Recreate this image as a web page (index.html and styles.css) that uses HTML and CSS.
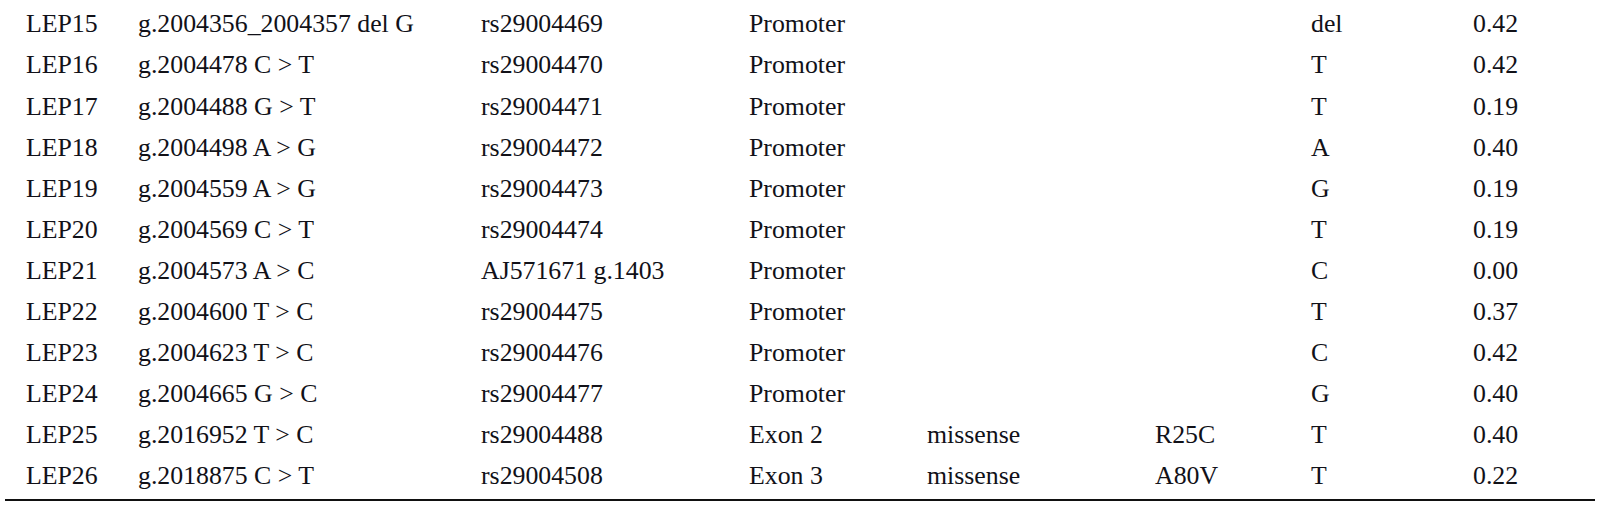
FILE: index.html
```html
<!DOCTYPE html>
<html>
<head>
<meta charset="utf-8">
<link rel="stylesheet" href="styles.css">
</head>
<body>
<div class="table">
  <div class="row"><span>LEP15</span><span>g.2004356_2004357 del G</span><span>rs29004469</span><span>Promoter</span><span></span><span></span><span>del</span><span>0.42</span></div>
  <div class="row"><span>LEP16</span><span>g.2004478 C &gt; T</span><span>rs29004470</span><span>Promoter</span><span></span><span></span><span>T</span><span>0.42</span></div>
  <div class="row"><span>LEP17</span><span>g.2004488 G &gt; T</span><span>rs29004471</span><span>Promoter</span><span></span><span></span><span>T</span><span>0.19</span></div>
  <div class="row"><span>LEP18</span><span>g.2004498 A &gt; G</span><span>rs29004472</span><span>Promoter</span><span></span><span></span><span>A</span><span>0.40</span></div>
  <div class="row"><span>LEP19</span><span>g.2004559 A &gt; G</span><span>rs29004473</span><span>Promoter</span><span></span><span></span><span>G</span><span>0.19</span></div>
  <div class="row"><span>LEP20</span><span>g.2004569 C &gt; T</span><span>rs29004474</span><span>Promoter</span><span></span><span></span><span>T</span><span>0.19</span></div>
  <div class="row"><span>LEP21</span><span>g.2004573 A &gt; C</span><span>AJ571671 g.1403</span><span>Promoter</span><span></span><span></span><span>C</span><span>0.00</span></div>
  <div class="row"><span>LEP22</span><span>g.2004600 T &gt; C</span><span>rs29004475</span><span>Promoter</span><span></span><span></span><span>T</span><span>0.37</span></div>
  <div class="row"><span>LEP23</span><span>g.2004623 T &gt; C</span><span>rs29004476</span><span>Promoter</span><span></span><span></span><span>C</span><span>0.42</span></div>
  <div class="row"><span>LEP24</span><span>g.2004665 G &gt; C</span><span>rs29004477</span><span>Promoter</span><span></span><span></span><span>G</span><span>0.40</span></div>
  <div class="row"><span>LEP25</span><span>g.2016952 T &gt; C</span><span>rs29004488</span><span>Exon 2</span><span>missense</span><span>R25C</span><span>T</span><span>0.40</span></div>
  <div class="row"><span>LEP26</span><span>g.2018875 C &gt; T</span><span>rs29004508</span><span>Exon 3</span><span>missense</span><span>A80V</span><span>T</span><span>0.22</span></div>
</div>
</body>
</html>
```

FILE: styles.css
```css
html, body {
  margin: 0;
  padding: 0;
  background: #ffffff;
}
body {
  font-family: "Liberation Serif", "Times New Roman", serif;
  font-size: 25.8px;
  color: #111118;
}
.table {
  width: 1590px;
  margin-left: 5px;
  padding-top: 3.4px;
  padding-bottom: 2.5px;
  border-bottom: 2px solid #111;
}
.row {
  display: grid;
  grid-template-columns: 112px 343px 268px 178px 228px 156px 162px 122px;
  padding-left: 21px;
  height: 41.1px;
  line-height: 41.1px;
  white-space: nowrap;
}
```
